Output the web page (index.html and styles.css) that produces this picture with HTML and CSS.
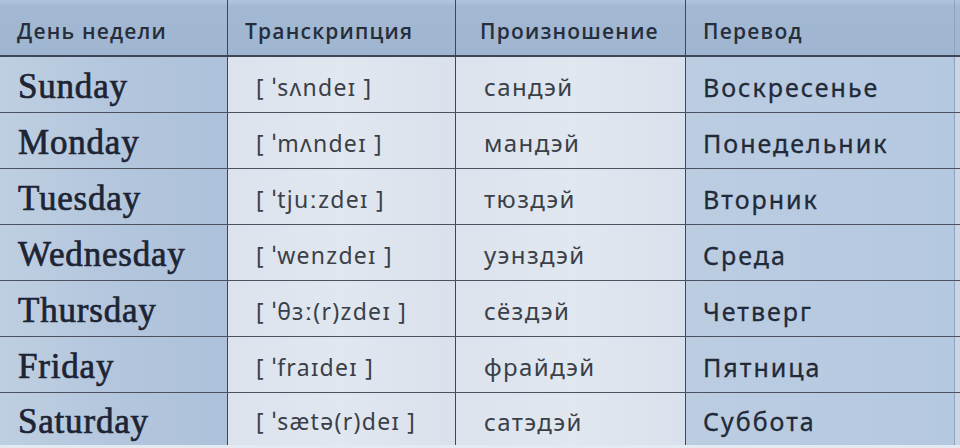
FILE: index.html
```html
<!DOCTYPE html>
<html lang="ru">
<head>
<meta charset="utf-8">
<link rel="stylesheet" href="styles.css">
</head>
<body>
<div class="table">
  <div class="row head">
    <div class="cell c1">День недели</div>
    <div class="cell c2">Транскрипция</div>
    <div class="cell c3">Произношение</div>
    <div class="cell c4">Перевод</div>
  </div>
  <div class="row">
    <div class="cell c1 day">Sunday</div>
    <div class="cell c2 tr">[ ˈsʌndeɪ ]</div>
    <div class="cell c3 pr">сандэй</div>
    <div class="cell c4 ru">Воскресенье</div>
  </div>
  <div class="row">
    <div class="cell c1 day">Monday</div>
    <div class="cell c2 tr">[ ˈmʌndeɪ ]</div>
    <div class="cell c3 pr">мандэй</div>
    <div class="cell c4 ru">Понедельник</div>
  </div>
  <div class="row">
    <div class="cell c1 day">Tuesday</div>
    <div class="cell c2 tr">[ ˈtjuːzdeɪ ]</div>
    <div class="cell c3 pr">тюздэй</div>
    <div class="cell c4 ru">Вторник</div>
  </div>
  <div class="row">
    <div class="cell c1 day">Wednesday</div>
    <div class="cell c2 tr">[ ˈwenzdeɪ ]</div>
    <div class="cell c3 pr">уэнздэй</div>
    <div class="cell c4 ru">Среда</div>
  </div>
  <div class="row">
    <div class="cell c1 day">Thursday</div>
    <div class="cell c2 tr">[ ˈθɜː(r)zdeɪ ]</div>
    <div class="cell c3 pr">сёздэй</div>
    <div class="cell c4 ru">Четверг</div>
  </div>
  <div class="row">
    <div class="cell c1 day">Friday</div>
    <div class="cell c2 tr">[ ˈfraɪdeɪ ]</div>
    <div class="cell c3 pr">фрайдэй</div>
    <div class="cell c4 ru">Пятница</div>
  </div>
  <div class="row last">
    <div class="cell c1 day">Saturday</div>
    <div class="cell c2 tr">[ ˈsætə(r)deɪ ]</div>
    <div class="cell c3 pr">сатэдэй</div>
    <div class="cell c4 ru">Суббота</div>
  </div>
</div>
</body>
</html>
```
FILE: styles.css
```css
html, body {
  margin: 0;
  padding: 0;
  background: #c9d5e4;
}
.table {
  width: 960px;
  height: 448px;
  display: flex;
  flex-direction: column;
  overflow: hidden;
}
.row {
  display: grid;
  grid-template-columns: 228px 228px 230px 274px;
  height: 56px;
  border-bottom: 1px solid #4a5262;
  box-sizing: border-box;
}
.row.head {
  height: 57px;
  border-bottom: 2px solid #3d4656;
  background: linear-gradient(180deg, #b2c5dc 0px, #a3b9d3 6px, #9fb5d0 100%);
}
.row.last {
  border-bottom: 3px solid #e4eaf2;
  height: 55px;
}
.cell {
  display: flex;
  align-items: center;
  border-right: 1.5px solid #3e4757;
  box-sizing: border-box;
  color: #222a38;
  white-space: nowrap;
}
.cell.c4 {
  border-right: 1px solid #8fa3bd;
  margin-right: 5px;
}
.head .cell {
  font-family: "Open Sans", "Noto Sans", sans-serif;
  font-weight: 600;
  font-size: 21px;
  letter-spacing: 1.2px;
  color: #262e3c;
  padding-top: 7px;
}
.head .c1 { padding-left: 17px; }
.head .c2 { padding-left: 17px; }
.head .c3 { padding-left: 24px; }
.head .c4 { padding-left: 17px; }

.day {
  background: linear-gradient(90deg, #bfcfe2 0%, #b3c6dd 50%, #adc1da 100%);
  font-family: "Liberation Serif", "Times New Roman", serif;
  font-weight: 400;
  font-size: 35px;
  letter-spacing: 0.8px;
  -webkit-text-stroke: 0.7px #1d2433;
  color: #1d2433;
  padding-left: 18px;
  padding-top: 5px;
}
.tr, .pr {
  background: linear-gradient(90deg, #dce3ed 0%, #e1e7ef 50%, #d9e1ec 100%);
  font-family: "Noto Sans", "DejaVu Sans", sans-serif;
  font-size: 23px;
  color: #3a3f48;
  padding-top: 4px;
}
.tr { padding-left: 28px; letter-spacing: 1.3px; }
.pr { padding-left: 28px; font-size: 24px; letter-spacing: 1.4px; }
.ru {
  background: linear-gradient(90deg, #bccde2 0%, #b4c8e0 100%);
  font-family: "Noto Sans", "DejaVu Sans", sans-serif;
  font-size: 25px;
  letter-spacing: 2px;
  font-weight: 400;
  -webkit-text-stroke: 0.3px #222a38;
  color: #222a38;
  padding-left: 17px;
  padding-top: 4px;
}
```
